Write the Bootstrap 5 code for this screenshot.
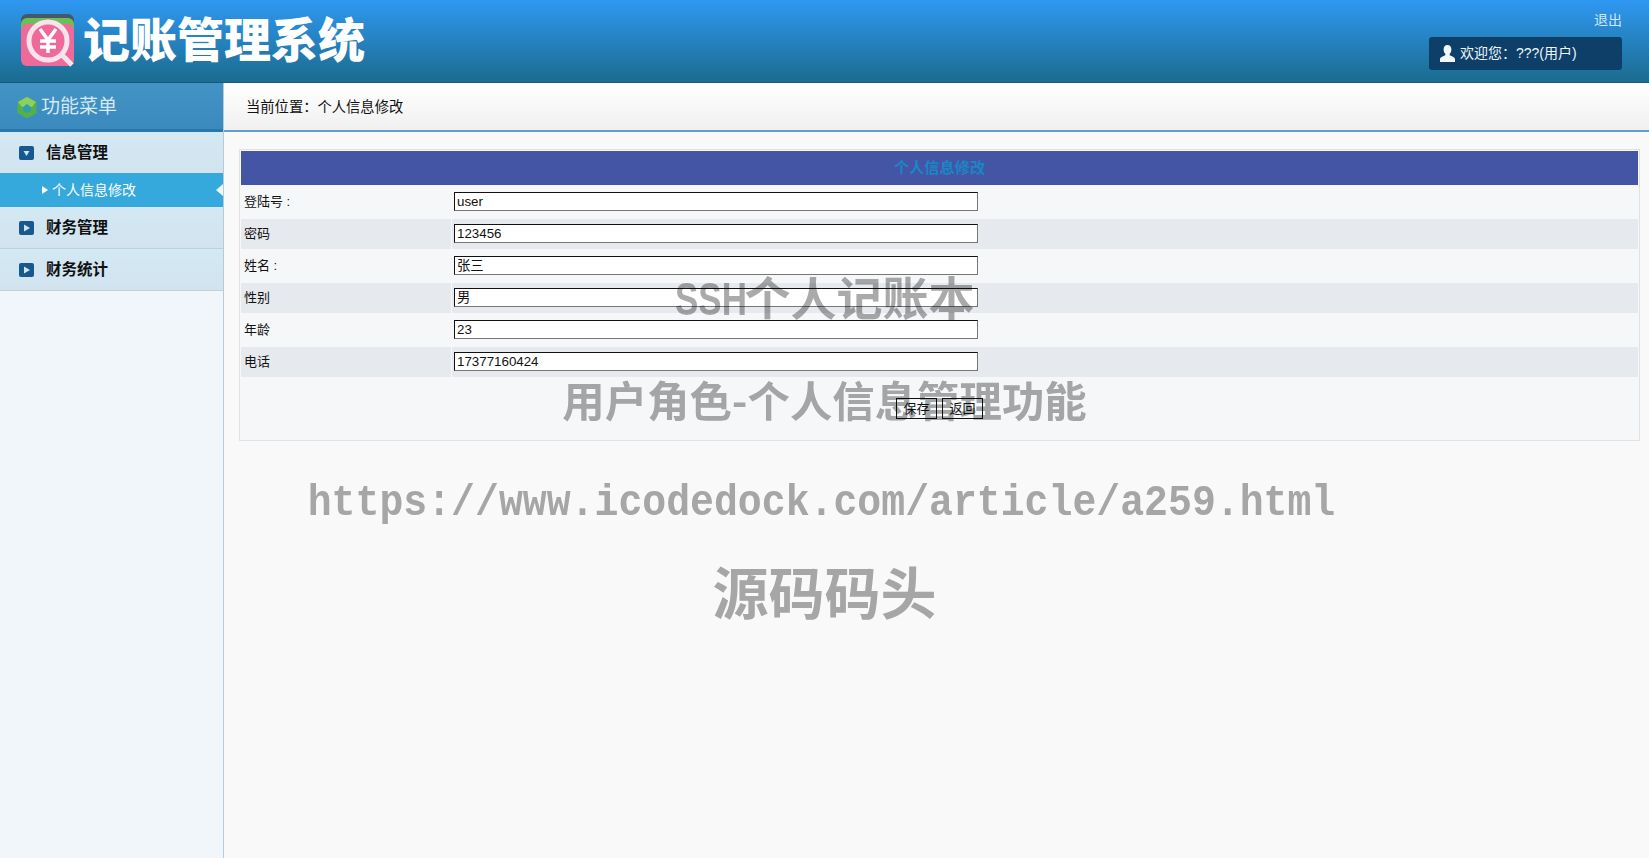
<!DOCTYPE html>
<html lang="zh-CN">
<head>
    <meta charset="UTF-8">
    <meta name="viewport" content="width=device-width, initial-scale=1.0">
    <title>记账管理系统</title>
    <link rel="stylesheet" href="https://cdn.jsdelivr.net/npm/bootstrap@5.3.0/dist/css/bootstrap.min.css">
    <style>
        html, body { height: 100%; }
        body {
            background: #f9f9f9;
            color: #111;
            font-family: "Liberation Sans", "Noto Sans CJK SC", sans-serif;
            font-size: 13px;
            overflow: hidden;
        }
        .top-bar {
            height: 83px;
            background: linear-gradient(#2f98f2, #1b6c8e);
            border-bottom: 1px solid #14597a;
        }
        .logo-text {
            color: #fff;
            font-family: "Noto Sans CJK SC", sans-serif;
            font-size: 47px;
            font-weight: 900;
            line-height: 1;
            margin-left: 8px;
            margin-bottom: 10px;
        }
        .logo-mark { margin-left: 21px; }
        .user-side { width: 193px; margin-right: 27px; }
        .logout-link { color: #cfe6f5; font-size: 14px; text-decoration: none; margin-top: 12px; margin-bottom: 8px; line-height: 17px; }
        .user-box {
            height: 33px;
            background: #0d3f68;
            border-radius: 3px;
            color: #eef6fb;
            font-size: 14px;
            padding-left: 11px;
            gap: 5px;
        }
        .main-wrap { height: 775px; }
        .side-menu {
            width: 224px;
            background: #f1f6fa;
            border-right: 1px solid #b7cad8;
        }
        .side-head {
            height: 49px;
            background: linear-gradient(#4393c5, #3a8abd);
            border-bottom: 3px solid #2a77ab;
            color: #d5e8f3;
            font-size: 19px;
            padding-left: 17px;
            padding-top: 2px;
        }
        .menu-item {
            height: 42px;
            background: linear-gradient(#d3e9f3, #d1e3ef);
            border-bottom: 1px solid #c3cfd6;
            color: #111;
            font-size: 15.5px;
            font-weight: 700;
            padding-left: 19px;
            text-decoration: none;
        }
        .menu-item.first-item { height: 41px; border-bottom: 0; }
        .menu-icon { margin-right: 12px; }
        .sub-item {
            height: 34px;
            background: #36a9dc;
            color: #fff;
            font-size: 14px;
            padding-left: 42px;
            text-decoration: none;
        }
        .sub-item::before {
            content: "";
            border-left: 6px solid #fff;
            border-top: 4px solid transparent;
            border-bottom: 4px solid transparent;
            margin-right: 4px;
        }
        .sub-item::after {
            content: "";
            position: absolute;
            right: 0;
            top: 11px;
            border-right: 7px solid #f1f6fa;
            border-top: 6px solid transparent;
            border-bottom: 6px solid transparent;
        }
        .crumb-bar {
            height: 49px;
            background: linear-gradient(#fff, #f0f0f0);
            border-bottom: 2px solid #5c9fd0;
            font-size: 14.3px;
            padding-left: 22px;
            padding-top: 2px;
        }
        .form-box {
            margin: 17px 9px 0 15px;
            height: 292px;
            border: 1px solid #dfe3e8;
            background: #f6f7f9;
        }
        .edit-table { border-collapse: separate; border-spacing: 1px 2px; width: 100%; margin-top: -1px; }
        .edit-table th {
            height: 34px;
            background: #4455a6;
            color: #1a86c4;
            font-size: 15.2px;
            font-weight: 700;
            text-align: center;
        }
        .edit-table td { height: 30px; padding: 0 2px; background: #f5f7f9; font-size: 13px; }
        .edit-table tr.alt-row td { background: #e6e9ee; }
        .edit-table td.label-cell { width: 210px; padding-left: 3px; }
        .edit-input {
            display: block;
            width: 524px;
            height: 19px;
            margin-bottom: 1px;
            padding: 0 2px;
            background: #fff;
            border: 1px solid;
            border-color: #111 #777 #777 #111;
            font-family: "Liberation Sans", "Noto Sans CJK SC", sans-serif;
            font-size: 13.33px;
            color: #111;
        }
        .edit-table td.btn-cell { height: 60px; background: transparent; vertical-align: top; padding: 19px 0 0 0; }
        .plain-btn {
            width: 41px;
            height: 21px;
            padding: 0;
            background: transparent;
            border: 1px solid #111;
            font-size: 13px;
            line-height: 19px;
            color: #111;
        }
        .btn-pair { gap: 5px; }
        .water-mark {
            top: 0;
            left: 0;
            width: 1649px;
            pointer-events: none;
            color: #aaa;
            font-family: "Noto Sans CJK SC", sans-serif;
            font-weight: 700;
            text-align: center;
            white-space: nowrap;
            mix-blend-mode: multiply;
        }
        .water-line { position: absolute; left: 0; width: 100%; line-height: 1; }
        .wm-one { top: 272px; font-size: 46px; }
        .wm-narrow {
            display: inline-block;
            width: 70px;
            text-align: left;
            font-family: "Liberation Sans", sans-serif;
            font-size: 46px;
            transform: scaleX(.76);
            transform-origin: left center;
        }
        .wm-two { top: 378px; font-size: 42.4px; }
        .wm-three { top: 481px; font-size: 44px; font-family: "Liberation Mono", monospace; transform: translateX(-3px) scaleX(.905); }
        .wm-four { top: 562px; font-size: 56px; }
    </style>
</head>
<body class="position-relative">
    <header class="top-bar d-flex justify-content-between">
        <div class="d-flex align-items-center">
            <svg class="logo-mark" width="54" height="54" viewBox="0 0 54 54">
                <rect x="0" y="0" width="53" height="50" rx="6" fill="#46566b"/>
                <rect x="0" y="4" width="53" height="20" rx="6" fill="#6cbf57"/>
                <rect x="0" y="10" width="53" height="42" rx="6" fill="#ee6a98"/>
                <circle cx="27" cy="27" r="19" fill="#ee6a98" stroke="#fbe3ec" stroke-width="5"/>
                <path d="M41 41l10 10" stroke="#fbe3ec" stroke-width="5"/>
                <path d="M19 15l8 11 8-11M27 26v13M19 27h16M19 33h16" fill="none" stroke="#fff" stroke-width="3.4"/>
            </svg>
            <span class="logo-text">记账管理系统</span>
        </div>
        <div class="user-side d-flex flex-column align-items-end">
            <a href="#" class="logout-link">退出</a>
            <div class="user-box w-100 d-flex align-items-center">
                <svg width="15" height="17" viewBox="0 0 15 17"><path d="M7.5 0C10 0 11.4 2 11.4 4.4c0 1.800-.7 3.400-1.700 4.400v1.400c1.500.8 5.300 1.800 5.300 4V17H0v-2.800c0-2.200 3.800-3.200 5.300-4V8.800C4.300 7.800 3.600 6.200 3.600 4.400 3.600 2 5 0 7.500 0z" fill="#f4f8fb"/></svg>
                <span>欢迎您：???(用户)</span>
            </div>
        </div>
    </header>

    <div class="main-wrap d-flex">
        <aside class="side-menu flex-shrink-0">
            <div class="side-head d-flex align-items-center gap-1">
                <svg width="20" height="21" viewBox="0 0 20 21">
                    <path d="M10 0l9 5v11l-9 5-9-5V5z" fill="#55b04a" stroke="#55b04a" stroke-linejoin="round"/>
                    <path d="M10 0l9 5-4 5-10 0-4-5z" fill="#8ed05f"/>
                    <path d="M10 7l4 3v4l-4 2-4-2v-4z" fill="#2f9fa8"/>
                </svg>
                <span>功能菜单</span>
            </div>
            <nav class="nav flex-column">
                <a href="#" class="menu-item first-item d-flex align-items-center">
                    <svg class="menu-icon" width="15" height="14" viewBox="0 0 15 14"><rect width="15" height="14" rx="2" fill="#17598f"/><path d="M4.500 5h6L7.500 10z" fill="#cfe3f2"/></svg>
                    <span>信息管理</span>
                </a>
                <a href="#" class="sub-item position-relative d-flex align-items-center">个人信息修改</a>
                <a href="#" class="menu-item d-flex align-items-center">
                    <svg class="menu-icon" width="15" height="14" viewBox="0 0 15 14"><rect width="15" height="14" rx="2" fill="#17598f"/><path d="M5 3.500v7L11 7z" fill="#cfe3f2"/></svg>
                    <span>财务管理</span>
                </a>
                <a href="#" class="menu-item d-flex align-items-center">
                    <svg class="menu-icon" width="15" height="14" viewBox="0 0 15 14"><rect width="15" height="14" rx="2" fill="#17598f"/><path d="M5 3.500v7L11 7z" fill="#cfe3f2"/></svg>
                    <span>财务统计</span>
                </a>
            </nav>
        </aside>

        <main class="flex-grow-1">
            <div class="crumb-bar d-flex align-items-center">当前位置：个人信息修改</div>
            <form class="form-box">
                <table class="edit-table">
                    <tr><th colspan="2">个人信息修改</th></tr>
                    <tr><td class="label-cell">登陆号 :</td><td><input class="edit-input" value="user"></td></tr>
                    <tr class="alt-row"><td class="label-cell">密码</td><td><input class="edit-input" value="123456"></td></tr>
                    <tr><td class="label-cell">姓名 :</td><td><input class="edit-input" value="张三"></td></tr>
                    <tr class="alt-row"><td class="label-cell">性别</td><td><input class="edit-input" value="男"></td></tr>
                    <tr><td class="label-cell">年龄</td><td><input class="edit-input" value="23"></td></tr>
                    <tr class="alt-row"><td class="label-cell">电话</td><td><input class="edit-input" value="17377160424"></td></tr>
                    <tr><td colspan="2" class="btn-cell"><div class="btn-pair d-flex justify-content-center"><button type="button" class="plain-btn">保存</button><button type="button" class="plain-btn">返回</button></div></td></tr>
                </table>
            </form>
        </main>
    </div>

    <div class="water-mark position-absolute">
        <div class="water-line wm-one"><span class="wm-narrow">SSH</span>个人记账本</div>
        <div class="water-line wm-two">用户角色-个人信息管理功能</div>
        <div class="water-line wm-three">https://www.icodedock.com/article/a259.html</div>
        <div class="water-line wm-four">源码码头</div>
    </div>

    <script src="https://cdn.jsdelivr.net/npm/bootstrap@5.3.0/dist/js/bootstrap.bundle.min.js"></script>
</body>
</html>
